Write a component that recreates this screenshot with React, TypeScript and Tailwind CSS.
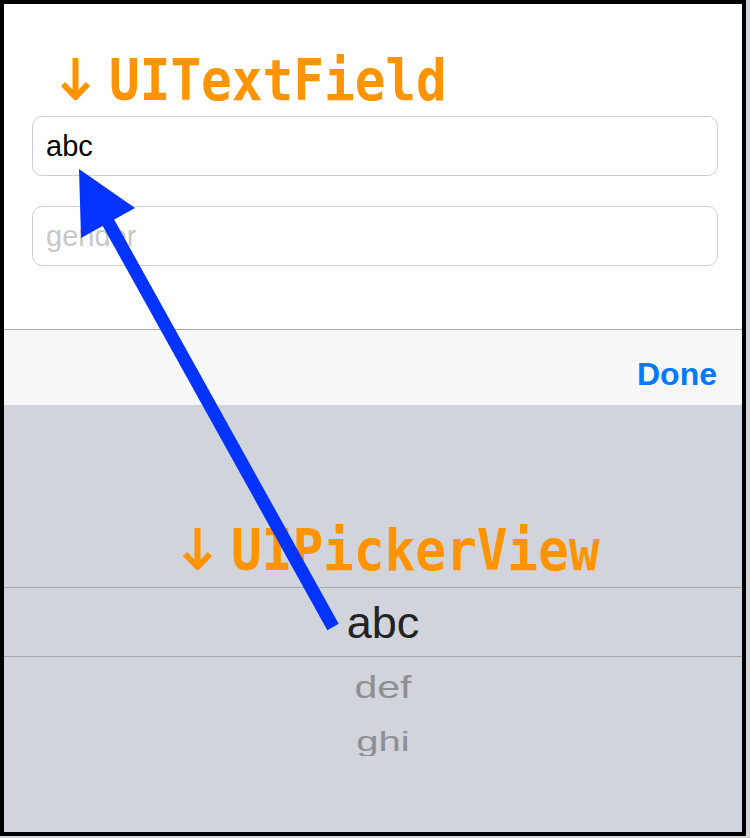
import React from 'react';

const mono = { fontFamily: '"DejaVu Sans Mono", "Liberation Mono", monospace' };
const sans = { fontFamily: '"Liberation Sans", Arial, sans-serif' };

// annotation label drawn on top of the screenshot (orange monospace caption)
const Caption = ({ text }: { text: string }) => (
  <div className="flex items-start h-[51px] whitespace-nowrap">
    <svg width="31" height="42" viewBox="0 0 31 42" className="mr-[18px] shrink-0">
      <line x1="15.5" y1="0" x2="15.5" y2="39" stroke="#ff9300" strokeWidth="6" />
      <polyline points="3,26 15.5,39 28,26" fill="none" stroke="#ff9300" strokeWidth="6" strokeLinejoin="miter" />
    </svg>
    <span
      className="block h-[51px] text-[51px] leading-none font-bold text-[#ff9300] origin-bottom scale-y-[1.13]"
      style={mono}
    >
      {text}
    </span>
  </div>
);

const Field = ({ value, placeholder }: { value?: string; placeholder: string }) => (
  <div className="h-[60px] rounded-[10px] border border-[#cfcfd3] bg-white flex items-center pl-[13px]">
    <span className={`text-[29px] leading-none ${value ? 'text-black' : 'text-[#c7c7cd]'}`} style={sans}>
      {value || placeholder}
    </span>
  </div>
);

export default function App() {
  return (
    <div className="relative w-[750px] h-[838px] bg-[#d3d5da] overflow-hidden">
      <div className="w-[746px] h-[836px] border-4 border-black flex flex-col bg-white">
        {/* text fields */}
        <div className="h-[326px] border-b border-[#a9a9ad] pt-[54px] pl-[28px] pr-[24px]">
          <div className="pl-[28px]">
            <Caption text="UITextField" />
          </div>
          <div className="mt-[7px]">
            <Field value="abc" placeholder="name" />
          </div>
          <div className="mt-[30px]">
            <Field placeholder="gender" />
          </div>
        </div>

        {/* toolbar */}
        <div className="h-[75px] bg-[#f7f7f7] flex justify-end pt-[28px] pr-[25px]">
          <span className="text-[32px] leading-none font-bold text-[#007aff]" style={sans}>
            Done
          </span>
        </div>

        {/* picker */}
        <div className="flex-1 bg-[#d1d4db] flex flex-col pt-[123px]">
          <div className="pl-[178px]">
            <Caption text="UIPickerView" />
          </div>
          <div className="mt-[8px] h-[70px] border-y border-[#a7a9ae] flex items-center justify-center pl-[20px]">
            <span className="text-[45px] leading-none text-[#232323]" style={sans}>abc</span>
          </div>
          <div className="mt-[10px] flex justify-center pl-[20px]">
            <span className="text-[41px] leading-none text-[#8e8e93] scale-y-[0.77]" style={sans}>def</span>
          </div>
          <div className="mt-[13px] flex justify-center pl-[20px]">
            <span className="text-[40px] leading-none text-[#8e8e93] scale-y-[0.68]" style={sans}>ghi</span>
          </div>
        </div>
      </div>

      {/* blue arrow annotation */}
      <svg className="absolute inset-0 pointer-events-none" width="750" height="838" viewBox="0 0 750 838">
        <line x1="333" y1="627" x2="108" y2="222" stroke="#0432ff" strokeWidth="13" />
        <polygon points="79,169 135,208 81,238" fill="#0432ff" />
      </svg>
    </div>
  );
}
